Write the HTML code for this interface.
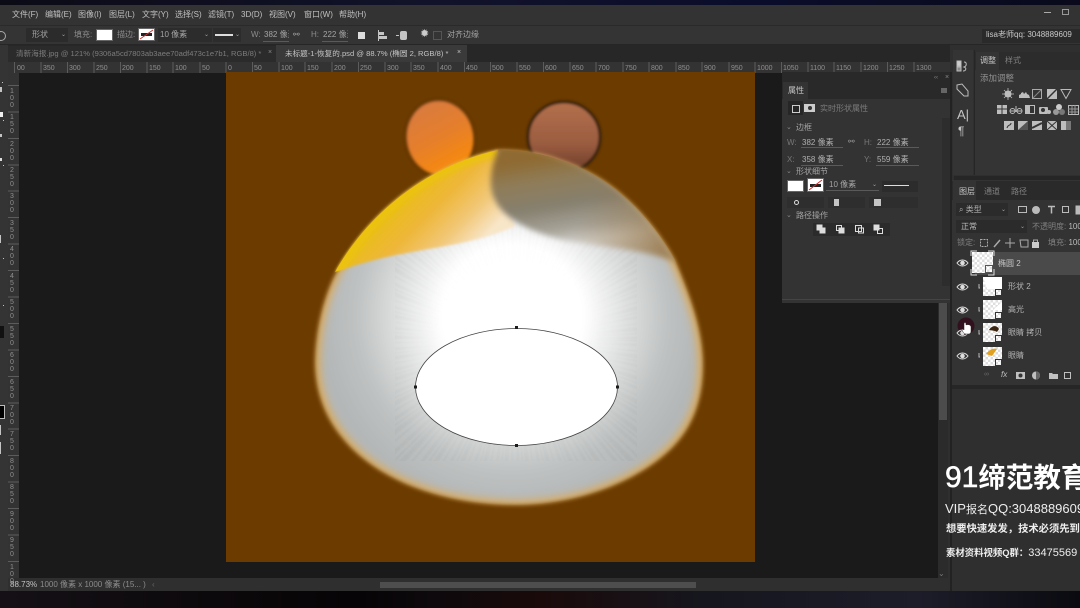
<!DOCTYPE html>
<html lang="zh"><head><meta charset="utf-8"><title>Photoshop</title>
<style>
html,body{margin:0;padding:0;background:#000}
#p{position:relative;width:1080px;height:608px;overflow:hidden;background:#2f2f2f;font-family:"Liberation Sans","Noto Sans CJK SC",sans-serif;color:#a4a4a4;font-size:8px;line-height:10px}
#ui{position:absolute;inset:0;filter:blur(.35px)}
.a{position:absolute;white-space:nowrap}
.b{position:absolute}
.ic{position:absolute;background:#c4c4c4}
.chk{position:absolute;background:repeating-conic-gradient(#dedede 0 25%,#fff 0 50%) 0 0/5px 5px}
.ln{position:absolute;height:1px;background:#5a5a5a}
.wm{position:absolute;white-space:nowrap;color:#eee}
</style></head><body><div id="p">
<div class="b" style="left:0;top:0;width:1080px;height:5px;background:linear-gradient(90deg,#0b0b16,#12122a 40%,#0a0d2a 70%,#0a0a1c)"></div>
<div class="b" style="left:0;top:591px;width:1080px;height:17px;background:linear-gradient(90deg,#141016,#0a0709 25%,#060406 33%,#0d090c 40%,#1a0a0a 50%,#16161e 65%,#1d1d2a 85%,#0a0a10)"></div>
<div id="ui">
<div class="b" style="left:0;top:5px;width:1080px;height:20px;background:#333"></div>
<div class="b" style="left:0;top:25px;width:1080px;height:20px;background:#343434;border-top:1px solid #2a2a2a;border-bottom:1px solid #262626;box-sizing:border-box"></div>
<div class="b" style="left:0;top:45px;width:950px;height:17px;background:#272727"></div>
<div class="b" style="left:8px;top:46px;width:268px;height:16px;background:#2b2b2b"></div>
<div class="b" style="left:276px;top:45px;width:191px;height:17px;background:#3a3a3a"></div>
<div class="b" style="left:8px;top:62px;width:942px;height:11px;background:#333"></div>
<div class="b" style="left:0;top:45px;width:8px;height:546px;background:#343434"></div>
<div class="b" style="left:8px;top:72px;width:11px;height:506px;background:#333"></div>
<div class="b" style="left:19px;top:73px;width:763px;height:505px;background:#1a1a1a"></div>
<div class="b" style="left:782px;top:303px;width:158px;height:275px;background:#1a1a1a"></div>
<div class="b" style="left:8px;top:578px;width:932px;height:13px;background:#2f2f2f"></div>
<div class="b" style="left:380px;top:582px;width:316px;height:6px;background:#4e4e4e"></div>
<div class="b" style="left:938px;top:96px;width:10px;height:482px;background:#2b2b2b"></div>
<div class="b" style="left:939px;top:120px;width:8px;height:300px;background:#4c4c4c"></div>

<!-- menu -->
<span class="a" style="left:12px;top:10px;color:#c0c0c0">文件(F)</span>
<span class="a" style="left:45px;top:10px;color:#c0c0c0">编辑(E)</span>
<span class="a" style="left:78px;top:10px;color:#c0c0c0">图像(I)</span>
<span class="a" style="left:109px;top:10px;color:#c0c0c0">图层(L)</span>
<span class="a" style="left:142px;top:10px;color:#c0c0c0">文字(Y)</span>
<span class="a" style="left:175px;top:10px;color:#c0c0c0">选择(S)</span>
<span class="a" style="left:208px;top:10px;color:#c0c0c0">滤镜(T)</span>
<span class="a" style="left:241px;top:10px;color:#c0c0c0">3D(D)</span>
<span class="a" style="left:269px;top:10px;color:#c0c0c0">视图(V)</span>
<span class="a" style="left:304px;top:10px;color:#c0c0c0">窗口(W)</span>
<span class="a" style="left:339px;top:10px;color:#c0c0c0">帮助(H)</span>
<div class="b" style="left:1044px;top:12px;width:7px;height:1px;background:#aaa"></div>
<div class="b" style="left:1062px;top:9px;width:5px;height:4px;border:1px solid #999"></div>

<!-- options -->
<div class="b" style="left:-4px;top:31px;width:8px;height:8px;border:1px solid #aaa;border-radius:50%"></div>
<div class="b" style="left:26px;top:28px;width:42px;height:14px;background:#2b2b2b"></div>
<span class="a" style="left:32px;top:30px">形状</span><span class="a" style="left:61px;top:30px;font-size:6px">⌄</span>
<span class="a" style="left:74px;top:30px;color:#8c8c8c">填充:</span>
<div class="b" style="left:96px;top:29px;width:15px;height:10px;background:#fff;border:1px solid #666"></div>
<span class="a" style="left:117px;top:30px;color:#8c8c8c">描边:</span>
<svg class="b" style="left:138px;top:28px" width="17" height="13"><rect x=".5" y=".5" width="16" height="12" fill="#fff" stroke="#666"/><rect x="3" y="5" width="11" height="3" fill="#222"/><path d="M2 11L15 2" stroke="#d03030"/></svg>
<div class="b" style="left:158px;top:28px;width:54px;height:14px;background:#2c2c2c"></div>
<span class="a" style="left:160px;top:30px">10 像素</span><span class="a" style="left:204px;top:30px;font-size:6px">⌄</span>
<div class="b" style="left:213px;top:28px;width:28px;height:14px;background:#2c2c2c"></div>
<div class="b" style="left:215px;top:34px;width:18px;height:2px;background:#ddd"></div><span class="a" style="left:235px;top:30px;font-size:6px">⌄</span>
<span class="a" style="left:251px;top:30px;color:#8c8c8c">W:</span><span class="a" style="left:264px;top:30px;width:25px;overflow:hidden">382 像素</span><div class="ln" style="left:263px;top:41px;width:26px"></div>
<span class="a" style="left:293px;top:30px">⚯</span>
<span class="a" style="left:311px;top:30px;color:#8c8c8c">H:</span><span class="a" style="left:323px;top:30px;width:25px;overflow:hidden">222 像素</span><div class="ln" style="left:322px;top:41px;width:26px"></div>
<div class="ic" style="left:358px;top:32px;width:7px;height:7px;background:#ddd"></div>
<div class="ic" style="left:378px;top:30px;width:1px;height:11px"></div><div class="ic" style="left:379px;top:32px;width:5px;height:3px"></div><div class="ic" style="left:379px;top:36px;width:8px;height:3px"></div>
<div class="ic" style="left:396px;top:35px;width:3px;height:1px"></div><div class="ic" style="left:400px;top:31px;width:7px;height:9px;border-radius:2px"></div>
<span class="a" style="left:420px;top:29px;font-size:11px;color:#ccc">✹</span>
<div class="b" style="left:433px;top:31px;width:7px;height:7px;border:1px solid #555"></div>
<span class="a" style="left:447px;top:30px">对齐边缘</span>
<div class="b" style="left:982px;top:29px;width:98px;height:14px;background:#2a2a2a"></div>
<span class="a" style="left:986px;top:30px;color:#c8c8c8">lisa老师qq: 3048889609</span>

<!-- tabs -->
<span class="a" style="left:16px;top:49px;color:#7c7c7c;font-size:7.6px">清新海报.jpg @ 121% (9306a5cd7803ab3aee70adf473c1e7b1, RGB/8) *</span>
<span class="a" style="left:268px;top:48px;color:#8c8c8c;font-size:7px">×</span>
<span class="a" style="left:285px;top:49px;color:#c4c4c4;font-size:7.6px">未标题-1-恢复的.psd @ 88.7% (椭圆 2, RGB/8) *</span>
<span class="a" style="left:457px;top:48px;color:#c4c4c4;font-size:7px">×</span>

<!-- rulers -->
<svg class="b" style="left:0;top:0" width="1080" height="608" font-family="Liberation Sans" font-size="7" fill="#8f8f8f">
<path d="M14.5 62v11M41 62v11M67.5 62v11M94 62v11M120.500 62v11M147 62v11M173 62v11M200 62v11M226 62v11M252.500 62v11M279 62v11M305 62v11M332 62v11M358.500 62v11M385 62v11M411 62v11M438 62v11M464.500 62v11M490.500 62v11M517 62v11M543.500 62v11M570 62v11M596 62v11M623 62v11M649 62v11M676 62v11M702 62v11M729 62v11M755 62v11M781.500 62v11M808 62v11M834 62v11M861 62v11M887.500 62v11M914 62v11M8 85.500h11M8 112h11M8 138.500h11M8 165h11M8 191h11M8 217.500h11M8 244h11M8 270.500h11M8 297h11M8 323.500h11M8 350h11M8 376.500h11M8 403h11M8 429h11M8 455.500h11M8 482h11M8 508.500h11M8 535h11M8 561.500h11" stroke="#5c5c5c" stroke-width="1" fill="none"/>
<text x="17" y="70">00</text><text x="43" y="70">350</text><text x="69" y="70">300</text><text x="96" y="70">250</text><text x="122" y="70">200</text><text x="149" y="70">150</text><text x="175" y="70">100</text><text x="202" y="70">50</text><text x="228" y="70">0</text><text x="254" y="70">50</text><text x="281" y="70">100</text><text x="307" y="70">150</text><text x="334" y="70">200</text><text x="360" y="70">250</text><text x="387" y="70">300</text><text x="413" y="70">350</text><text x="440" y="70">400</text><text x="466" y="70">450</text><text x="492" y="70">500</text><text x="519" y="70">550</text><text x="545" y="70">600</text><text x="572" y="70">650</text><text x="598" y="70">700</text><text x="625" y="70">750</text><text x="651" y="70">800</text><text x="678" y="70">850</text><text x="704" y="70">900</text><text x="731" y="70">950</text><text x="757" y="70">1000</text><text x="783" y="70">1050</text><text x="810" y="70">1100</text><text x="836" y="70">1150</text><text x="863" y="70">1200</text><text x="889" y="70">1250</text><text x="916" y="70">1300</text>
<text x="10 10 10" y="93 100 107">100</text><text x="10 10 10" y="119 126 133">150</text><text x="10 10 10" y="146 153 160">200</text><text x="10 10 10" y="172 179 186">250</text><text x="10 10 10" y="198 205 212">300</text><text x="10 10 10" y="225 232 239">350</text><text x="10 10 10" y="251 258 265">400</text><text x="10 10 10" y="278 285 292">450</text><text x="10 10 10" y="304 311 318">500</text><text x="10 10 10" y="331 338 345">550</text><text x="10 10 10" y="357 364 371">600</text><text x="10 10 10" y="384 391 398">650</text><text x="10 10 10" y="410 417 424">700</text><text x="10 10 10" y="436 443 450">750</text><text x="10 10 10" y="463 470 477">800</text><text x="10 10 10" y="489 496 503">850</text><text x="10 10 10" y="516 523 530">900</text><text x="10 10 10" y="542 549 556">950</text><text x="10 10 10" y="569 576 583">100</text>
</svg>

<!-- left tools -->
<div class="ic" style="left:0;top:87px;width:2px;height:5px"></div><div class="ic" style="left:0;top:112px;width:3px;height:5px;background:#eee"></div><div class="ic" style="left:0;top:134px;width:2px;height:3px"></div><div class="ic" style="left:0;top:158px;width:2px;height:3px;background:#ddd"></div><div class="ic" style="left:0;top:235px;width:1px;height:8px"></div>
<div class="ic" style="left:2px;top:82px;width:1px;height:1px"></div><div class="ic" style="left:3px;top:120px;width:1px;height:1px"></div><div class="ic" style="left:3px;top:165px;width:1px;height:1px"></div><div class="ic" style="left:3px;top:258px;width:1px;height:1px"></div><div class="ic" style="left:3px;top:305px;width:1px;height:1px"></div>
<div class="b" style="left:0;top:326px;width:4px;height:12px;background:#111"></div>
<div class="b" style="left:-1px;top:405px;width:4px;height:12px;background:#000;border:1px solid #bbb"></div>
<div class="ic" style="left:0;top:425px;width:1px;height:10px"></div><div class="ic" style="left:0;top:442px;width:1px;height:12px"></div>

<!-- status -->
<span class="a" style="left:10px;top:580px;color:#c4c4c4">88.73%</span>
<span class="a" style="left:40px;top:580px;color:#8c8c8c">1000 像素 x 1000 像素 (15... )</span>
<span class="a" style="left:152px;top:580px;color:#666">‹</span>
<span class="a" style="left:938px;top:569px;color:#777;font-size:8px">⌄</span>

<!-- right docks -->
<div class="b" style="left:950px;top:45px;width:130px;height:546px;background:#2f2f2f"></div>
<div class="b" style="left:953px;top:50px;width:20px;height:125px;background:#343434"></div>
<div class="b" style="left:975px;top:52px;width:105px;height:123px;background:#343434"></div>
<div class="b" style="left:975px;top:52px;width:115px;height:18px;background:#2c2c2c"></div>
<div class="b" style="left:976px;top:52px;width:23px;height:18px;background:#343434"></div>
<span class="a" style="left:980px;top:56px;color:#c8c8c8">调整</span><span class="a" style="left:1005px;top:56px;color:#808080">样式</span>
<span class="a" style="left:980px;top:73px;color:#909090;font-size:8.5px">添加调整</span>
<div class="b" style="left:954px;top:176px;width:126px;height:4px;background:#262626"></div>
<div class="b" style="left:951px;top:385px;width:129px;height:4px;background:#262626"></div>
<svg class="b" style="left:955px;top:58px" width="15" height="80" fill="none" stroke="#bbb"><rect x="2" y="3" width="4" height="5" fill="#ccc"/><rect x="2" y="9" width="4" height="4" fill="#888"/><path d="M9 4c3 0 3 4 0 5c3 1 2 4-1 4"/><path d="M2 27l5-1l6 7v5h-4l-7-7z"/></svg>
<span class="a" style="left:957px;top:108px;font-size:13px;color:#c4c4c4;line-height:13px">A|</span>
<span class="a" style="left:958px;top:125px;font-size:12px;color:#c4c4c4;line-height:12px">¶</span>

<!-- adjustment icons -->
<svg class="b" style="left:1000px;top:88px;overflow:visible" width="80" height="46" fill="#bdbdbd" stroke="none">
<circle cx="8" cy="6" r="3.500"/><path d="M8 0v12M2 6h12M4 2l8 8M12 2l-8 8" stroke="#bdbdbd" stroke-width=".8"/>
<path d="M19 10v-3l2-1v-1l2-1l1 2l2-2l1 2l2 1l1 3z"/>
<rect x="32.500" y="1.500" width="9" height="9" fill="none" stroke="#aaa"/><path d="M33 10l8-8" stroke="#888"/>
<rect x="47" y="1" width="10" height="10"/><path d="M47 11l10-10" stroke="#333" stroke-width="1.500"/>
<path d="M61 1.500h10l-5 9z" fill="none" stroke="#bbb"/>
<rect x="-3" y="17" width="10" height="9"/><path d="M-3 21h10M2 17v9" stroke="#333"/>
<path d="M10 23h5M17 23h5M16 18v6" stroke="#bbb" fill="none"/><circle cx="12.500" cy="23" r="2.500" fill="none" stroke="#bbb"/><circle cx="19.500" cy="23" r="2.500" fill="none" stroke="#bbb"/>
<rect x="25" y="17" width="10" height="9"/><rect x="30" y="18" width="4" height="7" fill="#333"/>
<rect x="39" y="19" width="9" height="7" rx="1"/><circle cx="43" cy="22" r="2" fill="#333"/><circle cx="49" cy="24" r="2"/>
<circle cx="59" cy="19" r="3" fill="#ccc"/><circle cx="56" cy="24" r="3" fill="#999"/><circle cx="62" cy="24" r="3" fill="#777"/>
<rect x="68.500" y="17.500" width="10" height="9" fill="none" stroke="#bbb"/><path d="M68 21h10M68 24h10M72 17v9M75 17v9" stroke="#999"/>
<rect x="4" y="33" width="10" height="9"/><path d="M7 40c1-4 4-2 4-5" stroke="#333" fill="none"/>
<rect x="18" y="33" width="10" height="9"/><path d="M18 42l10-9v9z" fill="#555"/>
<rect x="32" y="33" width="10" height="9"/><path d="M32 40l10-5" stroke="#333" stroke-width="2"/>
<rect x="47" y="33" width="10" height="9"/><path d="M47 33l10 9M57 33l-10 9" stroke="#333"/>
<rect x="61" y="33" width="10" height="9" fill="#777"/><rect x="61" y="33" width="5" height="9"/>
</svg>

<!-- layers -->
<div class="b" style="left:952px;top:180px;width:128px;height:205px;background:#333"></div>
<div class="b" style="left:952px;top:181px;width:128px;height:19px;background:#2a2a2a"></div>
<div class="b" style="left:953px;top:181px;width:23px;height:19px;background:#333"></div>
<span class="a" style="left:959px;top:187px;color:#c8c8c8">图层</span><span class="a" style="left:984px;top:187px;color:#808080">通道</span><span class="a" style="left:1011px;top:187px;color:#808080">路径</span>
<div class="b" style="left:956px;top:203px;width:52px;height:13px;background:#2b2b2b"></div>
<span class="a" style="left:959px;top:205px;color:#b0b0b0">⌕ 类型</span><span class="a" style="left:1001px;top:205px;font-size:6px">⌄</span>
<svg class="b" style="left:1018px;top:204px" width="62" height="12" fill="none" stroke="#bbb"><rect x=".5" y="2.500" width="8" height="6"/><circle cx="18" cy="6" r="3.500" fill="#bbb"/><path d="M30 2.500h7M33.500 2.500v7" stroke-width="1.500"/><rect x="44.500" y="2.500" width="6" height="6"/><rect x="58" y="2" width="4" height="8" fill="#bbb"/></svg>
<div class="b" style="left:956px;top:220px;width:71px;height:13px;background:#2b2b2b"></div>
<span class="a" style="left:961px;top:222px;color:#bdbdbd">正常</span><span class="a" style="left:1020px;top:222px;font-size:6px">⌄</span>
<span class="a" style="left:1032px;top:222px;color:#808080">不透明度: <span style="color:#bbb">100%</span></span>
<span class="a" style="left:957px;top:238px;color:#808080">锁定:</span>
<svg class="b" style="left:980px;top:237px" width="60" height="12" fill="none" stroke="#aaa"><rect x=".5" y="2.500" width="7" height="7" stroke-dasharray="2 1"/><path d="M14 10l6-7" stroke-width="1.500"/><path d="M30 1v10M25 6h10"/><path d="M40 3h8v7h-7z"/><rect x="52" y="5" width="7" height="6" fill="#ccc" stroke="none"/><path d="M53.500 5v-2h4v2"/></svg>
<span class="a" style="left:1048px;top:238px;color:#808080">填充: <span style="color:#bbb">100%</span></span>
<div class="b" style="left:975px;top:252px;width:105px;height:23px;background:#4a4a4a"></div>
<div class="chk" style="left:972px;top:252px;width:21px;height:21px"></div>
<svg class="b" style="left:970px;top:250px" width="26" height="26" fill="none" stroke="#ddd"><path d="M1 6V1h6M18 1h6v5M1 19v6h6M18 25h6v-6"/><rect x="15.500" y="15.500" width="7" height="7" stroke="#555" fill="none"/></svg>
<span class="a" style="left:998px;top:259px;color:#c8c8c8">椭圆 2</span>
<div class="chk" style="left:983px;top:277px;width:19px;height:19px"></div>
<div class="chk" style="left:983px;top:300px;width:19px;height:19px"></div>
<div class="chk" style="left:983px;top:323px;width:19px;height:19px"></div>
<div class="chk" style="left:983px;top:347px;width:19px;height:19px"></div>
<svg class="b" style="left:983px;top:277px" width="19" height="90"><g fill="#fff"><path d="M0 0h19v12H4z"/><path d="M10 33h9v-8z"/></g><path d="M6 53c3-5 8-5 10-1l-2 3c-3-2-5-1-8-2z" fill="#3b2410"/><path d="M3 77c4-5 8-6 11-5l-5 7z" fill="#e0a020"/><g fill="none" stroke="#333"><rect x="12.500" y="12.500" width="6" height="6"/><rect x="12.500" y="35.500" width="6" height="6"/><rect x="12.500" y="58.500" width="6" height="6"/><rect x="12.500" y="82.500" width="6" height="6"/></g></svg>
<span class="a" style="left:1008px;top:282px;color:#b4b4b4">形状 2</span>
<span class="a" style="left:1008px;top:305px;color:#b4b4b4">高光</span>
<span class="a" style="left:1008px;top:328px;color:#b4b4b4">眼睛 拷贝</span>
<span class="a" style="left:1008px;top:351px;color:#b4b4b4">眼睛</span>
<svg class="b" style="left:954px;top:255px;overflow:visible" width="30" height="110" fill="none" stroke="#ddd">
<path d="M3 8c3-4 8-4 11 0c-3 4-8 4-11 0z"/><circle cx="8.500" cy="8" r="1.800" fill="#ddd"/>
<path d="M3 32c3-4 8-4 11 0c-3 4-8 4-11 0z"/><circle cx="8.500" cy="32" r="1.800" fill="#ddd"/>
<path d="M3 55c3-4 8-4 11 0c-3 4-8 4-11 0z"/><circle cx="8.500" cy="55" r="1.800" fill="#ddd"/>
<circle cx="12" cy="71" r="8.500" fill="#32111e" stroke="none"/>
<path d="M3 78c3-4 8-4 11 0c-3 4-8 4-11 0z"/><circle cx="8.500" cy="78" r="1.800" fill="#ddd"/>
<path d="M3 101c3-4 8-4 11 0c-3 4-8 4-11 0z"/><circle cx="8.500" cy="101" r="1.800" fill="#ddd"/>
<path d="M25 29v4h1M25 52v4h1M25 75v4h1M25 98v4h1" stroke="#bbb"/>
<path d="M10 69c0-2 2-2 2 0v1c2-1 5 0 5 2v4c0 2-1 3-3 3h-2c-2 0-3-2-4-4c0-1 1-1 2 0z" fill="#fff" stroke="#222" stroke-width=".5"/>
</svg>
<span class="a" style="left:984px;top:370px;color:#666;font-size:7px">∞</span>
<span class="a" style="left:1001px;top:370px;color:#c0c0c0;font-style:italic">fx</span>
<svg class="b" style="left:1015px;top:370px" width="65" height="11" fill="#c0c0c0"><rect x="1" y="2" width="9" height="7"/><circle cx="5.500" cy="5.500" r="2" fill="#333"/><circle cx="21" cy="5.500" r="4"/><path d="M21 1.500v8a4 4 0 0 0 0-8z" fill="#666"/><path d="M34 3h3l1 1h5v5h-9z"/><path d="M49.500 2.500h6v6h-6z" fill="none" stroke="#c0c0c0"/></svg>

<!-- properties -->
<div class="b" style="left:782px;top:72px;width:168px;height:231px;background:#333"></div>
<div class="b" style="left:782px;top:72px;width:168px;height:27px;background:#292929"></div>
<div class="b" style="left:783px;top:82px;width:25px;height:17px;background:#333"></div>
<span class="a" style="left:788px;top:86px;color:#c8c8c8">属性</span>
<div class="ic" style="left:941px;top:88px;width:6px;height:5px;background:#666"></div>
<span class="a" style="left:934px;top:73px;font-size:6px;color:#888">‹‹</span><span class="a" style="left:945px;top:73px;font-size:7px;color:#888">×</span>
<div class="b" style="left:942px;top:118px;width:8px;height:168px;background:#2d2d2d"></div>
<div class="b" style="left:788px;top:101px;width:15px;height:14px;background:#262626"></div>
<div class="b" style="left:792px;top:105px;width:6px;height:6px;border:1px solid #ccc"></div>
<div class="b" style="left:804px;top:104px;width:11px;height:8px;background:#ccc"></div><div class="b" style="left:808px;top:106px;width:4px;height:4px;border-radius:50%;background:#333"></div>
<span class="a" style="left:820px;top:104px;color:#7c7c7c">实时形状属性</span>
<span class="a" style="left:786px;top:123px;color:#888;font-size:7px">⌄</span><span class="a" style="left:796px;top:123px">边框</span>
<span class="a" style="left:787px;top:138px;color:#777">W:</span><span class="a" style="left:802px;top:138px;color:#b0b0b0">382 像素</span><div class="ln" style="left:801px;top:147px;width:42px"></div>
<span class="a" style="left:848px;top:137px;color:#999">⚯</span>
<span class="a" style="left:864px;top:138px;color:#777">H:</span><span class="a" style="left:877px;top:138px;color:#b0b0b0">222 像素</span><div class="ln" style="left:876px;top:147px;width:43px"></div>
<span class="a" style="left:787px;top:155px;color:#777">X:</span><span class="a" style="left:802px;top:155px;color:#b0b0b0">358 像素</span><div class="ln" style="left:801px;top:165px;width:42px"></div>
<span class="a" style="left:864px;top:155px;color:#777">Y:</span><span class="a" style="left:877px;top:155px;color:#b0b0b0">559 像素</span><div class="ln" style="left:876px;top:165px;width:43px"></div>
<span class="a" style="left:786px;top:167px;color:#888;font-size:7px">⌄</span><span class="a" style="left:796px;top:167px">形状细节</span>
<div class="b" style="left:787px;top:180px;width:15px;height:10px;background:#fff;border:1px solid #666"></div>
<svg class="b" style="left:807px;top:178px" width="17" height="14"><rect x=".5" y=".5" width="16" height="13" fill="#fff" stroke="#666"/><rect x="3" y="6" width="11" height="3" fill="#222"/><path d="M2 12L15 2" stroke="#d03030"/></svg>
<span class="a" style="left:829px;top:180px">10 像素</span><div class="ln" style="left:826px;top:190px;width:53px"></div><span class="a" style="left:872px;top:180px;font-size:6px">⌄</span>
<div class="b" style="left:882px;top:181px;width:36px;height:11px;background:#2c2c2c"></div><div class="b" style="left:884px;top:185px;width:25px;height:1px;background:#ddd"></div>
<div class="b" style="left:787px;top:197px;width:37px;height:11px;background:#2e2e2e"></div>
<div class="b" style="left:828px;top:197px;width:37px;height:11px;background:#2e2e2e"></div>
<div class="b" style="left:869px;top:197px;width:49px;height:11px;background:#2e2e2e"></div>
<div class="b" style="left:794px;top:200px;width:3px;height:3px;border:1px solid #ddd;border-radius:50%"></div>
<div class="ic" style="left:834px;top:199px;width:5px;height:7px"></div>
<div class="ic" style="left:874px;top:199px;width:7px;height:7px"></div>
<span class="a" style="left:786px;top:211px;color:#888;font-size:7px">⌄</span><span class="a" style="left:796px;top:211px">路径操作</span>
<div class="b" style="left:813px;top:223px;width:77px;height:13px;background:#2b2b2b"></div>
<svg class="b" style="left:815px;top:223px" width="75" height="13" fill="#ddd" stroke="#ddd"><rect x="2" y="2" width="5" height="5"/><rect x="5" y="5" width="5" height="5"/><rect x="21.500" y="2.500" width="5" height="5" fill="none"/><rect x="24" y="5" width="5" height="5"/><rect x="40.500" y="2.500" width="6" height="6" fill="none"/><rect x="43.500" y="5" width="5" height="5" fill="none"/><rect x="59" y="2" width="5" height="5"/><rect x="62.500" y="5.500" width="5" height="5" fill="none"/></svg>
<div class="b" style="left:782px;top:299px;width:168px;height:1px;background:#444"></div>
<div class="b" style="left:950px;top:72px;width:2px;height:519px;background:#222"></div>
<div class="b" style="left:974px;top:50px;width:1px;height:125px;background:#262626"></div>
</div>

<!-- canvas art -->
<svg class="b" style="left:0;top:0" width="1080" height="608">
<defs>
<filter id="f1" x="-10%" y="-10%" width="120%" height="120%"><feGaussianBlur stdDeviation="2.200"/></filter>
<filter id="f2" x="-10%" y="-10%" width="120%" height="120%"><feGaussianBlur stdDeviation="1.400"/></filter>
<filter id="f3" x="-20%" y="-20%" width="140%" height="140%"><feGaussianBlur stdDeviation="4"/></filter>
<filter id="f4" x="-5%" y="-5%" width="110%" height="110%"><feGaussianBlur stdDeviation=".3"/></filter>
<filter id="f5" x="-20%" y="-20%" width="140%" height="140%"><feGaussianBlur stdDeviation="3"/></filter>
<filter id="f6" x="-5%" y="-5%" width="110%" height="110%"><feGaussianBlur stdDeviation=".6"/></filter>
<radialGradient id="g1" gradientUnits="userSpaceOnUse" cx="512" cy="315" r="195"><stop offset="0" stop-color="#fff"/><stop offset=".38" stop-color="#fff"/><stop offset=".6" stop-color="#dfe0e0"/><stop offset=".82" stop-color="#bfc2c2"/><stop offset="1" stop-color="#b4b7b7"/></radialGradient>
<radialGradient id="mg" gradientUnits="userSpaceOnUse" cx="516" cy="340" r="190"><stop offset=".4" stop-color="#000"/><stop offset=".85" stop-color="#fff"/></radialGradient>
<mask id="mk" maskUnits="userSpaceOnUse" x="300" y="140" width="420" height="380"><rect x="300" y="140" width="420" height="380" fill="url(#mg)"/></mask>
<linearGradient id="y1" gradientUnits="userSpaceOnUse" x1="420" y1="178" x2="482" y2="240"><stop offset="0" stop-color="#e9be18"/><stop offset=".35" stop-color="#eeb638"/><stop offset=".7" stop-color="#f2c878"/><stop offset="1" stop-color="#f8e6c8"/></linearGradient>
<linearGradient id="c1" gradientUnits="userSpaceOnUse" x1="555" y1="155" x2="570" y2="245"><stop offset="0" stop-color="#8f6a30"/><stop offset=".25" stop-color="#8f7c58"/><stop offset=".55" stop-color="#86806f"/><stop offset=".82" stop-color="#a8a49a"/><stop offset="1" stop-color="#d8d6d2"/></linearGradient>
<linearGradient id="c2" gradientUnits="userSpaceOnUse" x1="585" y1="205" x2="665" y2="240"><stop offset="0" stop-color="#96774a" stop-opacity="0"/><stop offset="1" stop-color="#96774a" stop-opacity=".85"/></linearGradient>
<linearGradient id="e1" x1="0" y1="0" x2=".3" y2="1"><stop offset="0" stop-color="#d67a44"/><stop offset=".6" stop-color="#e67f2a"/><stop offset="1" stop-color="#f88a0c"/></linearGradient>
<linearGradient id="e2" x1="0" y1="0" x2="0" y2="1"><stop offset="0" stop-color="#b4704c"/><stop offset=".6" stop-color="#9a5c40"/><stop offset="1" stop-color="#6c3c28"/></linearGradient>
<clipPath id="cv"><rect x="226" y="72" width="529" height="490"/></clipPath>
<clipPath id="bd"><path d="M498 150C430 165 370 210 335 275C320 305 315 340 315 365C316 400 330 430 360 456C400 490 460 505 515 505C580 505 640 480 672 448C695 425 704 395 703 360C702 330 692 300 675 260C650 215 610 175 560 160C540 152 515 150 498 150Z"/></clipPath>
<clipPath id="yc"><path d="M498 150C430 165 370 210 335 272C375 258 400 254 440 247C475 241 495 235 515 226L500 180Z"/></clipPath>
</defs>
<g clip-path="url(#cv)">
<rect x="226" y="72" width="529" height="490" fill="#6b3b00"/>
<g filter="url(#f2)">
<ellipse cx="440" cy="138" rx="34" ry="38" transform="rotate(-10 440 138)" fill="url(#e1)" stroke="#4c2a06" stroke-opacity=".5" stroke-width="3"/>
<ellipse cx="564" cy="137" rx="36" ry="35" fill="url(#e2)" stroke="#38210a" stroke-width="3"/>
</g>
<path filter="url(#f1)" fill="#d8ab62" d="M498 150C430 165 370 210 335 275C320 305 315 340 315 365C316 400 330 430 360 456C400 490 460 505 515 505C580 505 640 480 672 448C695 425 704 395 703 360C702 330 692 300 675 260C650 215 610 175 560 160C540 152 515 150 498 150Z"/>
<g clip-path="url(#bd)"><g filter="url(#f3)">
<path fill="url(#g1)" transform="translate(509 330) scale(.972 .972) translate(-509 -330)" d="M498 150C430 165 370 210 335 275C320 305 315 340 315 365C316 400 330 430 360 456C400 490 460 505 515 505C580 505 640 480 672 448C695 425 704 395 703 360C702 330 692 300 675 260C650 215 610 175 560 160C540 152 515 150 498 150Z"/>
</g>
<g mask="url(#mk)"><circle filter="url(#f6)" cx="516" cy="340" r="110" fill="none" stroke="#666" stroke-opacity=".06" stroke-width="170" stroke-dasharray="1 2.500 2 4 1 3 3 2"/></g>
</g>
<g filter="url(#f2)">
<path fill="url(#y1)" d="M498 150C430 165 370 210 335 272C375 258 400 254 440 247C475 241 495 235 515 226L500 180Z"/>
</g>
<g clip-path="url(#yc)"><path filter="url(#f5)" fill="none" stroke="#ecc310" stroke-width="12" d="M498 150C430 165 370 210 335 275"/></g>
<g filter="url(#f5)" clip-path="url(#bd)">
<path fill="url(#c1)" d="M500 146C490 165 488 188 495 200C503 218 530 232 563 240C600 247 640 248 676 262C650 215 610 175 560 158C540 150 515 146 500 146Z"/>
<path fill="url(#c2)" d="M500 146C490 165 488 188 495 200C503 218 530 232 563 240C600 247 640 248 676 262C650 215 610 175 560 158C540 150 515 146 500 146Z"/>
</g>
<g filter="url(#f4)">
<ellipse cx="516.500" cy="387" rx="101" ry="58.500" fill="#fff" stroke="#444" stroke-width=".8"/>
<g fill="#1c1c1c"><rect x="515" y="326" width="3" height="3"/><rect x="515" y="444" width="3" height="3"/><rect x="414" y="385.500" width="3" height="3"/><rect x="616" y="385.500" width="3" height="3"/></g>
</g>
</g>
</svg>

<!-- watermark -->
<div id="w" style="position:absolute;inset:0;filter:blur(.3px)">
<div class="wm" style="left:945px;top:459px;font-size:27.500px;line-height:38px;font-weight:700;color:#fff"><span style="font-size:30px;font-weight:400;-webkit-text-stroke:.5px #fff">91</span>缔范教育</div>
<div class="wm" style="left:945px;top:500px;font-size:13px;line-height:18px">VIP<span style="font-size:11px">报名</span>QQ:3048889609</div>
<div class="wm" style="left:946px;top:523px;font-size:10.300px;line-height:14px;font-weight:700">想要快速发发&#xFF0C;技术必须先到家</div>
<div class="wm" style="left:946px;top:546px;font-size:9.400px;line-height:14px;font-weight:700">素材资料视频Q群&#xFF1A;<span style="font-weight:400;font-size:11px">33475569</span></div>
</div>
</div></body></html>
